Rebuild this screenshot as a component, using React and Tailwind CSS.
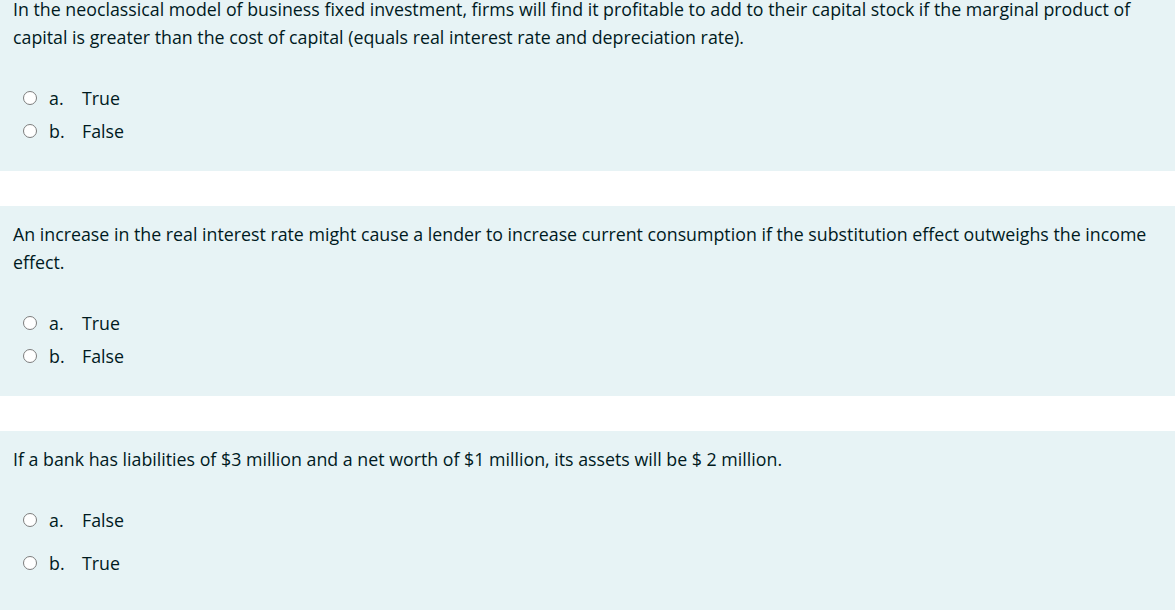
import React from 'react';

const questions = [
  {
    id: 1,
    lines: [
      'In the neoclassical model of business fixed investment, firms will find it profitable to add to their capital stock if the marginal product of',
      'capital is greater than the cost of capital (equals real interest rate and depreciation rate).',
    ],
    options: ['True', 'False'],
    first: true,
  },
  {
    id: 2,
    lines: [
      'An increase in the real interest rate might cause a lender to increase current consumption if the substitution effect outweighs the income',
      'effect.',
    ],
    options: ['True', 'False'],
  },
  {
    id: 3,
    lines: ['If a bank has liabilities of $3 million and a net worth of $1 million, its assets will be $ 2 million.'],
    options: ['False', 'True'],
    tall: true,
  },
];

const Radio = () => (
  <span className="w-[14px] h-[14px] rounded-full border-[1.5px] border-[#7d7d7d] bg-white shrink-0" />
);

const Question = ({ q }) => (
  <div className={`bg-[#e7f3f5] px-[13px] pt-[14px] ${q.first ? '-mt-[19px]' : ''} ${q.tall ? 'pb-[48px]' : 'pb-[29px]'}`}>
    <p className="leading-[28px]">
      {q.lines.map((l, i) => (
        <span key={i} className="block whitespace-nowrap">{l}</span>
      ))}
    </p>
    <div className={`mt-[36px] flex flex-col ${q.tall ? 'gap-[21px]' : 'gap-[11px]'}`}>
      {q.options.map((opt, i) => (
        <div key={opt} className="flex items-center h-[22px] pl-[10px]">
          <Radio />
          <span className="ml-[12px] w-[33px]">{i === 0 ? 'a.' : 'b.'}</span>
          <span>{opt}</span>
        </div>
      ))}
    </div>
  </div>
);

export default function App() {
  return (
    <div className="w-[1175px] h-[610px] overflow-hidden bg-white text-[#001a1e] text-[17.8px]" style={{ fontFamily: '"Open Sans", "Noto Sans", sans-serif' }}>
      <div className="flex flex-col gap-[35px]">
        {questions.map((q) => (
          <Question key={q.id} q={q} />
        ))}
      </div>
    </div>
  );
}
